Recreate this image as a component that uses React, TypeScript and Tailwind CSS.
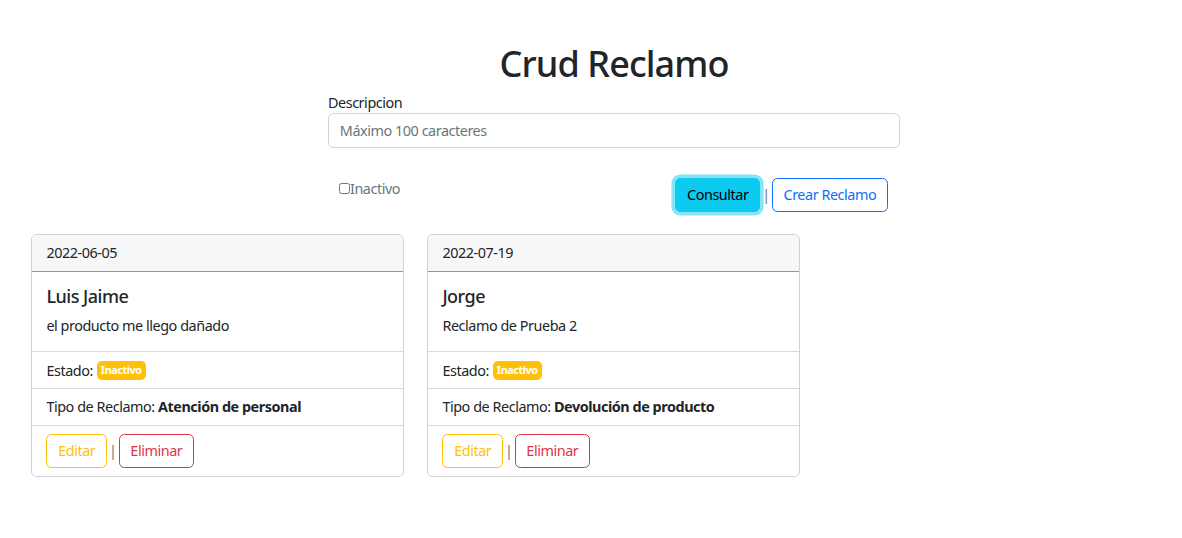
import React from 'react';

const reclamos = [
  { id: 1, fecha: '2022-06-05', nombre: 'Luis Jaime', descripcion: 'el producto me llego dañado', estado: 'Inactivo', tipo: 'Atención de personal' },
  { id: 2, fecha: '2022-07-19', nombre: 'Jorge', descripcion: 'Reclamo de Prueba 2', estado: 'Inactivo', tipo: 'Devolución de producto' },
];

const App: React.FC = () => {
  return (
    <div className="min-h-[538px] bg-white text-[#212529] text-[14.4px] leading-[21.6px] tracking-[-0.45px] font-['Noto_Sans','Segoe_UI',sans-serif]">
      {/* Header + filter form */}
      <div className="pl-[46px] flex flex-col items-center">
        <h1 className="mt-[42px] text-[36px] leading-[43.2px] font-medium tracking-[-0.9px]">Crud Reclamo</h1>
        <div className="w-[572px] mt-[7px]">
          <label className="block leading-[21px]">Descripcion</label>
          <input
            type="text"
            placeholder="Máximo 100 caracteres"
            className="block w-full h-[34.4px] px-[10.8px] border border-[#ced4da] rounded-[5.4px] text-[14.4px] tracking-[-0.45px] placeholder:text-[#6c757d] outline-none"
          />
          <div className="mt-[30px] flex items-start justify-between pl-[11px] pr-[12px]">
            <label className="flex items-center text-[#6c757d]">
              <input type="checkbox" className="w-[11px] h-[11px] m-0" />
              <span>Inactivo</span>
            </label>
            <div className="flex items-center">
              <button className="h-[34px] px-[10.8px] bg-[#0dcaf0] text-black rounded-[5.4px] border border-[#0dcaf0] shadow-[0_0_0_3.6px_rgba(13,202,240,0.5)]">
                Consultar
              </button>
              <span className="mx-[2px] text-[#6c757d]">|</span>
              <button className="h-[34px] px-[10.8px] text-[#0d6efd] rounded-[5.4px] border border-[#0d6efd] bg-white">
                Crear Reclamo
              </button>
            </div>
          </div>
        </div>
      </div>

      {/* Cards */}
      <div className="mt-[22px] px-[31px] flex gap-[23px] items-start">
        {reclamos.map(r => (
          <div key={r.id} className="w-[373px] border border-[#d2d2d2] rounded-[5.4px] overflow-hidden">
            <div className="bg-[#f7f7f7] px-[14.4px] py-[7.2px] border-b border-[#0dcaf0]">{r.fecha}</div>
            <div className="px-[14.4px] pt-[14.4px] pb-[15px]">
              <h5 className="text-[18px] leading-[21.6px] font-medium mb-[7.2px] tracking-[-0.5px]">{r.nombre}</h5>
              <p>{r.descripcion}</p>
            </div>
            <div className="border-t border-[#dadada] px-[14.4px] py-[7.2px] flex items-center">
              <span>Estado:</span>
              <span className="ml-[4px] bg-[#ffc107] text-white font-bold text-[10.8px] leading-none px-[4px] py-[4px] rounded-[5px] tracking-[-0.4px]">{r.estado}</span>
            </div>
            <div className="border-t border-[#dadada] px-[14.4px] py-[7.2px]">
              Tipo de Reclamo: <b className="font-bold">{r.tipo}</b>
            </div>
            <div className="border-t border-[#dadada] px-[14.4px] pt-[7.6px] pb-[8px] flex items-center">
              <button className="h-[34px] px-[10.8px] text-[#ffc107] border border-[#ffc107] rounded-[5.4px]">Editar</button>
              <span className="mx-[2px] text-[#6c757d]">|</span>
              <button className="h-[34px] px-[10.8px] text-[#dc3545] border border-[#dc3545] rounded-[5.4px]">Eliminar</button>
            </div>
          </div>
        ))}
      </div>
    </div>
  );
};

export default App;
